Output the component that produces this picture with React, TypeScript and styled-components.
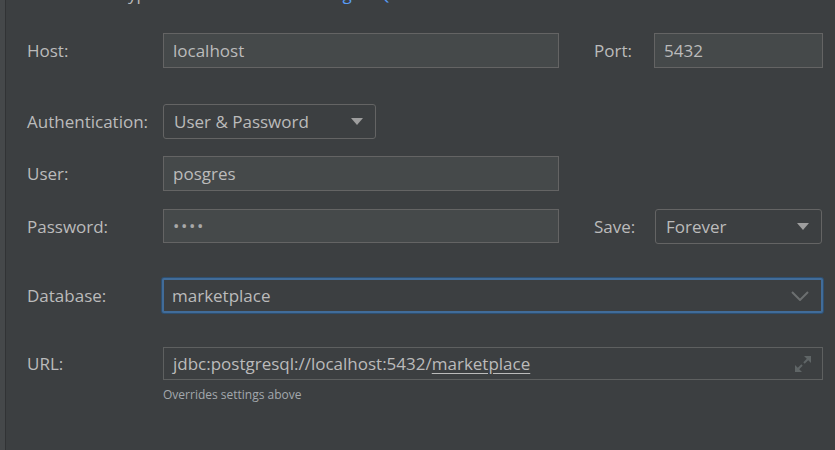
import { FC } from "react";
import styled, { createGlobalStyle } from "styled-components";

const GlobalStyle = createGlobalStyle`
  html, body {
    margin: 0;
    padding: 0;
    background: #3c3f41;
  }
  body {
    font-family: "Open Sans", "Noto Sans", sans-serif;
    color: #bbbbbb;
  }
`;

const Page = styled.div`
  display: flex;
  width: 835px;
  height: 450px;
  overflow: hidden;
  background: #3c3f41;
`;

const Strip = styled.div`
  width: 5px;
  flex: none;
  background: #45484a;
  border-right: 1px solid #313335;
`;

const Form = styled.div`
  flex: 1;
  display: flex;
  flex-direction: column;
  padding-left: 21px;
`;

// the tab header above is scrolled away, only its descenders peek in
const Header = styled.div`
  height: 16px;
  margin-top: -14px;
  display: flex;
  align-items: flex-end;
  font-size: 17px;
  line-height: 16px;
  white-space: nowrap;
  color: #bbbbbb;
`;

const Link = styled.span<{ $left?: number }>`
  color: #589df6;
  margin-left: ${(p) => p.$left ?? 0}px;
`;

const Row = styled.div<{ $gap: number; $h?: number }>`
  display: flex;
  align-items: center;
  height: ${(p) => p.$h ?? 35}px;
  margin-top: ${(p) => p.$gap}px;
`;

const Label = styled.div<{ $w: number; $ml?: number }>`
  width: ${(p) => p.$w}px;
  margin-left: ${(p) => p.$ml ?? 0}px;
  flex: none;
  font-size: 17px;
  color: #bbbbbb;
`;

const Field = styled.div<{ $w: number; $h?: number }>`
  box-sizing: border-box;
  width: ${(p) => p.$w}px;
  height: ${(p) => p.$h ?? 35}px;
  flex: none;
  display: flex;
  align-items: center;
  padding: 0 9px;
  background: #45494a;
  border: 1px solid #646464;
  font-size: 17px;
  color: #bbbbbb;
`;

const Dots = styled.span`
  font-size: 17px;
  letter-spacing: 1.6px;
  color: #a8a8a8;
  margin-top: -2px;
`;

const Combo = styled.div<{ $w: number }>`
  box-sizing: border-box;
  width: ${(p) => p.$w}px;
  height: 35px;
  flex: none;
  display: flex;
  align-items: center;
  justify-content: space-between;
  padding: 0 12px 0 10px;
  background: #3c3f41;
  border: 1px solid #646464;
  border-radius: 3px;
  font-size: 17px;
  color: #bbbbbb;
`;

const Triangle = styled.span`
  width: 0;
  height: 0;
  border-left: 6px solid transparent;
  border-right: 6px solid transparent;
  border-top: 7px solid #9e9e9e;
`;

const FocusField = styled.div`
  box-sizing: border-box;
  width: 661px;
  height: 35px;
  margin-left: -1px;
  flex: none;
  display: flex;
  align-items: center;
  justify-content: space-between;
  padding: 0 12px 0 8px;
  background: #3c3f41;
  border: 2px solid #416c99;
  box-shadow: 0 0 0 1px #2e4f70;
  border-radius: 2px;
  font-size: 17px;
  color: #bbbbbb;
`;

const UrlField = styled(Field)`
  background: #3c3f41;
  border-color: #5e6060;
  justify-content: space-between;
  padding-right: 10px;
`;

const Under = styled.span`
  text-decoration: underline;
  text-underline-offset: 3px;
`;

const Hint = styled.div`
  margin: 6px 0 0 136px;
  font-size: 12px;
  color: #a3a8ad;
`;

const Chevron: FC = () => (
  <svg width="18" height="10" viewBox="0 0 18 10">
    <polyline points="1,1 9,9 17,1" fill="none" stroke="#6c6f70" strokeWidth="2" />
  </svg>
);

const Expand: FC = () => (
  <svg width="18" height="18" viewBox="0 0 18 18">
    <line x1="10" y1="8" x2="15" y2="3" stroke="#5f6566" strokeWidth="2" />
    <polygon points="10,1 17,1 17,8" fill="#5f6566" />
    <line x1="8" y1="10" x2="3" y2="15" stroke="#5f6566" strokeWidth="2" />
    <polygon points="1,10 1,17 8,17" fill="#5f6566" />
  </svg>
);

const App: FC = () => (
  <>
    <GlobalStyle />
    <Page>
      <Strip />
      <Form>
        <Header>
          Connection type: <Link $left={4}>default</Link>
          <span style={{ marginLeft: 30 }}>Driver:</span>
          <Link $left={4}>PostgreSQL</Link>
          <Link $left={340}>Test Connection</Link>
        </Header>
        <Row $gap={31}>
          <Label $w={136}>Host:</Label>
          <Field $w={396}>localhost</Field>
          <Label $w={60} $ml={35}>Port:</Label>
          <Field $w={169}>5432</Field>
        </Row>
        <Row $gap={36}>
          <Label $w={136}>Authentication:</Label>
          <Combo $w={213}>
            User &amp; Password
            <Triangle />
          </Combo>
        </Row>
        <Row $gap={17}>
          <Label $w={136}>User:</Label>
          <Field $w={396}>posgres</Field>
        </Row>
        <Row $gap={18} $h={34}>
          <Label $w={136}>Password:</Label>
          <Field $w={396} $h={34}>
            <Dots>••••</Dots>
          </Field>
          <Label $w={61} $ml={35}>Save:</Label>
          <Combo $w={167}>
            Forever
            <Triangle />
          </Combo>
        </Row>
        <Row $gap={35}>
          <Label $w={136}>Database:</Label>
          <FocusField>
            marketplace
            <Chevron />
          </FocusField>
        </Row>
        <Row $gap={34} $h={33}>
          <Label $w={136}>URL:</Label>
          <UrlField $w={660} $h={33}>
            <span>
              jdbc:postgresql://localhost:5432/<Under>marketplace</Under>
            </span>
            <Expand />
          </UrlField>
        </Row>
        <Hint>Overrides settings above</Hint>
      </Form>
    </Page>
  </>
);

export default App;
